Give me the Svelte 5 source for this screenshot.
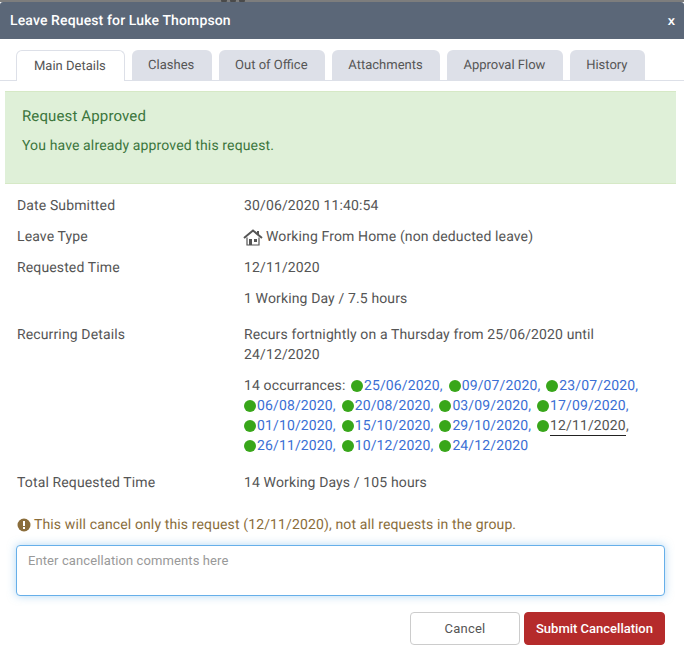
<script>
  const tabs = ["Main Details", "Clashes", "Out of Office", "Attachments", "Approval Flow", "History"];

  const details = [
    { label: "Date Submitted", lines: ["30/06/2020 11:40:54"] },
    { label: "Leave Type", home: true, lines: ["Working From Home (non deducted leave)"] },
    { label: "Requested Time", lines: ["12/11/2020", "1 Working Day / 7.5 hours"] }
  ];

  // one inner array per visual line of the occurrence list
  const occurrences = [
    ["25/06/2020", "09/07/2020", "23/07/2020"],
    ["06/08/2020", "20/08/2020", "03/09/2020", "17/09/2020"],
    ["01/10/2020", "15/10/2020", "29/10/2020", "12/11/2020"],
    ["26/11/2020", "10/12/2020", "24/12/2020"]
  ];
  const current = "12/11/2020";
  const last = "24/12/2020";
</script>

<div class="backdrop">
  <div class="strip">
    <span></span><span></span><span></span>
  </div>
  <div class="dialog">
    <header class="title-bar">
      <span class="title">Leave Request for Luke Thompson</span>
      <span class="close">x</span>
    </header>

    <nav class="tabs">
      {#each tabs as tab, i}
        <span class="tab" class:active={i === 0}>{tab}</span>
      {/each}
    </nav>

    <div class="alert">
      <div class="alert-head">Request Approved</div>
      <div>You have already approved this request.</div>
    </div>

    <div class="details">
      {#each details as row}
        <div class="label">{row.label}</div>
        <div class="value">
          {#each row.lines as line}
            <div class="line">
              {#if row.home}
                <svg class="home" viewBox="0 0 20 17" width="20" height="17">
                  <path d="M1 9 L10 1.500 L19 9" fill="none" stroke="#555" stroke-width="2" />
                  <path d="M15 2v4" stroke="#555" stroke-width="2" />
                  <path d="M4 8.500V16H16V8.500" fill="none" stroke="#555" stroke-width="1.200" />
                  <path d="M6 10h3v6h-3zM11 10h3v3h-3z" fill="#555" />
                </svg>
              {/if}
              {line}
            </div>
          {/each}
        </div>
      {/each}

      <div class="label spaced">Recurring Details</div>
      <div class="value spaced">
        <div class="recurs">Recurs fortnightly on a Thursday from 25/06/2020 until 24/12/2020</div>
        <div class="occurrences">
          {#each occurrences as dates, n}
            <div class="occ-line">
              {#if n === 0}<span class="occ-label">14 occurrances:</span>{/if}
              {#each dates as date}
                <span class="occ">
                  <span class="dot"></span>{#if date === current}<span class="now">{date}</span>,{:else}<span class="date">{date}{date === last ? "" : ","}</span>{/if}
                </span>
              {/each}
            </div>
          {/each}
        </div>
      </div>

      <div class="label total">Total Requested Time</div>
      <div class="value total"><div class="line">14 Working Days / 105 hours</div></div>
    </div>

    <div class="warning">
      <svg viewBox="0 0 14 14" width="14" height="14">
        <circle cx="7" cy="7" r="6.500" fill="#8a6d3b" />
        <rect x="6" y="3" width="2" height="5" fill="#fff" />
        <rect x="6" y="9" width="2" height="2" fill="#fff" />
      </svg>
      This will cancel only this request (12/11/2020), not all requests in the group.
    </div>

    <div class="comment-wrap">
      <textarea class="comment" placeholder="Enter cancellation comments here"></textarea>
    </div>

    <div class="actions">
      <button class="btn cancel">Cancel</button>
      <button class="btn submit">Submit Cancellation</button>
    </div>
  </div>
</div>

<style>
  :global(body) {
    margin: 0;
    background: #fff;
  }

  .backdrop {
    background: #7d7d7d;
    height: 667px;
    overflow: hidden;
  }

  .strip {
    height: 2px;
    overflow: hidden;
    display: flex;
    gap: 3px;
    padding-left: 221px;
  }

  .strip span {
    width: 6px;
    height: 6px;
    margin-top: -3px;
    border-radius: 50%;
    background: #4a4a4a;
  }

  .dialog {
    background: #fff;
    height: 665px;
    font-family: Roboto, sans-serif;
    font-size: 14px;
    color: #555;
    letter-spacing: 0.13px;
    text-rendering: geometricPrecision;
  }

  .title-bar {
    height: 37px;
    background: #5b6778;
    color: #fff;
    display: flex;
    align-items: center;
    justify-content: space-between;
    padding: 0 9px 0 10px;
    border-radius: 3px 3px 0 0;
  }

  .title {
    font-size: 14px;
    font-weight: 500;
    letter-spacing: 0.13px;
    padding-top: 1px;
  }

  .close {
    font-size: 13px;
    font-weight: 700;
    font-family: "Liberation Sans", sans-serif;
  }

  .tabs {
    display: flex;
    gap: 6.800px;
    padding: 11px 0 0 16px;
    height: 30px;
    border-bottom: 1px solid #dde0e8;
    font-size: 13px;
    letter-spacing: 0;
  }

  .tab {
    background: #dde0e8;
    border-radius: 6px 6px 0 0;
    padding: 0 17.500px 0 16.500px;
    line-height: 32px;
    height: 30px;
  }

  .tab.active {
    background: #fff;
    border: 1px solid #dde0e8;
    border-bottom: none;
    height: 31px;
    line-height: 31px;
    box-sizing: border-box;
    padding: 0 18px 0 17px;
  }

  .alert {
    margin: 10px 8px 0 5px;
    height: 93px;
    box-sizing: border-box;
    padding: 14px 17px;
    background: #dff0d8;
    border-top: 1px solid #d6e9c6;
    border-bottom: 1px solid #d6e9c6;
    color: #3c763d;
  }

  .alert-head {
    font-size: 15px;
    line-height: 20px;
    margin-bottom: 12px;
  }

  .details {
    display: grid;
    grid-template-columns: 227px 1fr;
    padding: 12px 40px 0 17px;
    line-height: 20px;
    row-gap: 11px;
  }

  .spaced {
    margin-top: 5px;
  }

  .total {
    margin-top: 6px;
  }

  .value {
    display: flex;
    flex-direction: column;
    gap: 11px;
  }

  .line {
    display: flex;
    align-items: center;
    gap: 2px;
  }

  .home {
    margin-left: -1px;
    margin-right: 1px;
  }

  .occ-line {
    display: flex;
    gap: 6px;
    white-space: nowrap;
  }

  .occ-label {
    margin-right: -0.500px;
  }

  .occ {
    display: inline-flex;
    align-items: center;
  }

  .dot {
    width: 12px;
    height: 12px;
    border-radius: 50%;
    background: #38a61a;
    margin-right: 1px;
  }

  .date {
    color: #3b6fd4;
  }

  .now {
    border-bottom: 1px solid #222;
    line-height: 18px;
  }

  .warning {
    display: flex;
    align-items: center;
    gap: 3px;
    margin: 22px 0 0 17px;
    color: #8a6d3b;
    line-height: 20px;
  }

  .comment-wrap {
    padding: 10px 19px 0 16px;
  }

  .comment {
    display: block;
    width: 100%;
    height: 51px;
    box-sizing: border-box;
    padding: 7px 11px;
    border: 1px solid #66afe9;
    border-radius: 4px;
    box-shadow: 0 0 8px rgba(102, 175, 233, 0.5);
    font: inherit;
    font-size: 13px;
    letter-spacing: 0.1px;
    outline: none;
    resize: none;
  }

  .comment::placeholder {
    color: #999;
  }

  .actions {
    display: flex;
    justify-content: flex-end;
    gap: 4px;
    padding: 16px 19px 0 0;
  }

  .btn {
    height: 33px;
    border-radius: 4px;
    font: inherit;
    font-size: 13px;
    letter-spacing: 0;
    box-sizing: border-box;
  }

  .cancel {
    width: 110px;
    background: #fff;
    border: 1px solid #ccc;
    color: #555;
    letter-spacing: 0.2px;
  }

  .submit {
    width: 141px;
    background: #b52b2b;
    border: 1px solid #b52b2b;
    color: #fff;
    font-weight: 500;
  }
</style>
